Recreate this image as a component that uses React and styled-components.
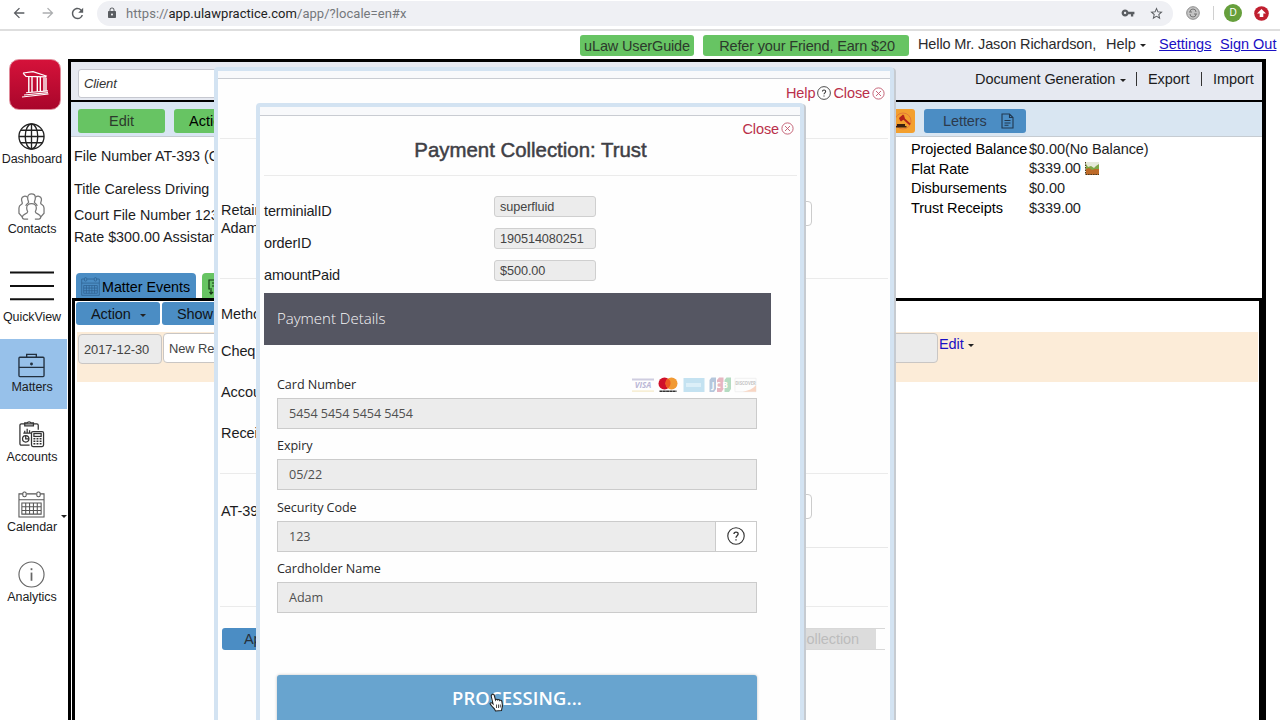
import React from 'react'
import styled, { createGlobalStyle } from 'styled-components'
import { MdArrowBack, MdArrowForward, MdLock, MdRefresh, MdStarBorder, MdVpnKey } from 'react-icons/md'

const GlobalStyle = createGlobalStyle`
  * {
    box-sizing: border-box;
  }
  body {
    margin: 0;
    background: #fff;
    color: #1c1c1e;
    font-family: "Liberation Sans", Arial, sans-serif;
    font-size: 14.5px;
    letter-spacing: -0.08px;
    overflow: hidden;
  }
  svg {
    display: block;
    flex-shrink: 0;
  }
`

const Page = styled.div`
  position: relative;
  display: flex;
  flex-direction: column;
  width: 1280px;
  height: 720px;
  overflow: hidden;
  white-space: nowrap;
`

/* browser bar */

const BrowserBar = styled.div`
  display: flex;
  align-items: center;
  height: 31px;
  padding: 0 11px 3px 11px;
  border-bottom: 2px solid #dedede;
  color: #5a5d61;
`

const NavIcon = styled.span`
  display: flex;
  margin-right: 13px;
  opacity: ${props => (props.$dim ? 0.5 : 1)};
`

const Address = styled.div`
  display: flex;
  align-items: center;
  width: 1076px;
  height: 25px;
  margin-left: -2px;
  padding: 0 9px;
  border-radius: 13px;
  background: #eff0f4;
`

const Url = styled.span`
  flex: 1;
  margin-left: 8px;
  color: #75787c;
  font-family: Roboto, sans-serif;
  font-size: 13px;
  letter-spacing: 0.04px;
`

const Host = styled.span`
  color: #222;
`

const AddressIcon = styled.span`
  display: flex;
  margin-left: 14px;
`

const Extensions = styled.div`
  display: flex;
  align-items: center;
  margin-left: 13px;
`

const Divider = styled.span`
  width: 1px;
  height: 14px;
  margin: 0 10px 0 13px;
  background: #d0d0d0;
`

const Avatar = styled.span`
  width: 18px;
  height: 18px;
  margin-right: 12px;
  border-radius: 50%;
  background: #669f3c;
  color: #fff;
  font-size: 10px;
  line-height: 18px;
  text-align: center;
`

/* links above the frame */

const TopLinks = styled.div`
  display: flex;
  height: 28px;
  padding: 4px 0 0 580px;
`

const GreenLink = styled.a`
  width: ${props => props.$width}px;
  height: 21px;
  margin-right: 9px;
  border-radius: 3px;
  background: #67c463;
  color: #2c3a2c;
  line-height: 22px;
  text-align: center;
  text-indent: ${props => props.$indent || 0}px;
  letter-spacing: -0.15px;
`

const TopItem = styled.span`
  width: ${props => props.$width}px;
  color: #2b2b2d;
  line-height: 19px;
  letter-spacing: ${props => props.$spacing || 0}px;
`

const BlueLink = styled.a`
  margin-top: ${props => props.$top || 0}px;
  color: #1a10c4;
  text-decoration: ${props => (props.$plain ? 'none' : 'underline')};
`

const Caret = styled.span`
  display: inline-block;
  margin-left: ${props => props.$gap || 5}px;
  vertical-align: 2px;
  border: 3px solid transparent;
  border-top-color: #222;
  border-bottom: 0;
`

/* sidebar */

const Workspace = styled.div`
  display: flex;
  flex: 1;
  min-height: 0;
`

const Sidebar = styled.nav`
  width: 68px;
  flex-shrink: 0;
`

const Logo = styled.div`
  display: flex;
  align-items: center;
  justify-content: center;
  width: 52px;
  height: 51px;
  margin: 0 0 0 9px;
  border: 1px solid #e08a99;
  border-radius: 10px;
  background: linear-gradient(#d5123a, #a9062b);
`

const NavItem = styled.div`
  display: flex;
  flex-direction: column;
  align-items: center;
  justify-content: flex-end;
  width: 67px;
  height: ${props => props.$height || 70}px;
  padding: 0 4px 13px 0;
  background: ${props => (props.$active ? '#97c1ea' : 'transparent')};
  position: relative;
`

const NavLabel = styled.span`
  margin-top: ${props => props.$gap || 0}px;
  padding-left: 1px;
  font-size: 12.5px;
  line-height: 18px;
`

const NavCaret = styled(Caret)`
  position: absolute;
  right: 0;
  bottom: 31px;
`

/* matter frame */

const Frame = styled.main`
  width: 1198px;
  height: 700px;
  border: 3px solid #000;
  border-right-width: 4px;
`

const SearchBar = styled.div`
  display: flex;
  align-items: center;
  height: 40px;
  padding: 4px 8px 0 7px;
  border-bottom: 2px solid #000;
  background: #e6e9f1;
`

const ClientInput = styled.div`
  width: 300px;
  height: 29px;
  padding-left: 5px;
  border: 1px solid #c6c8d0;
  border-radius: 3px;
  background: #fff;
  color: #333;
  font-size: 13px;
  font-style: italic;
  line-height: 28px;
`

const Menu = styled.div`
  display: flex;
  align-items: center;
  margin: 0 0 8px auto;
  line-height: 18px;
`

const MenuItem = styled.span`
  width: ${props => props.$width}px;
`

const MenuBar = styled.span`
  width: 1px;
  height: 14px;
  margin-right: 11px;
  background: #333;
`

const ActionBar = styled.div`
  display: flex;
  height: 35px;
  padding: 7px 0 0 7px;
  border-bottom: 1px solid #c6ccd2;
  background: #d9e6f2;
`

const GreenButton = styled.button`
  width: 87px;
  height: 24px;
  margin: 0 9px 0 0;
  padding: 0 0 0 ${props => props.$indent || 0}px;
  border: 0;
  border-radius: 3px;
  background: #67c463;
  color: ${props => props.$color || '#2c3a2c'};
  font: inherit;
  text-align: ${props => (props.$indent ? 'left' : 'center')};
`

const GavelButton = styled.span`
  display: flex;
  align-items: center;
  justify-content: center;
  width: 25px;
  height: 24px;
  margin: 0 9px 0 auto;
  border-radius: 3px;
  background: #f3a02f;
`

const LettersButton = styled.span`
  display: flex;
  align-items: center;
  justify-content: space-between;
  width: 102px;
  height: 24px;
  margin-right: 236px;
  padding: 0 12px 0 19px;
  border-radius: 3px;
  background: #4b8dc4;
  color: #2b3a4c;
`

const Details = styled.div`
  display: flex;
  height: 161px;
`

const MatterInfo = styled.div`
  width: 840px;
`

const InfoLine = styled.div`
  height: ${props => props.$height}px;
  padding-left: 3px;
  font-size: 14.3px;
  line-height: ${props => props.$height}px;
  letter-spacing: 0;
`

const Tabs = styled.div`
  display: flex;
  gap: 6px;
  margin: 27px 0 0 5px;
`

const Tab = styled.div`
  display: flex;
  align-items: center;
  gap: 2px;
  width: 120px;
  height: 25px;
  padding: 2px 0 0 5px;
  border-radius: 4px 4px 0 0;
  background: ${props => (props.$green ? '#67c463' : '#4b8dc4')};
  color: #000;
  font-size: 14.3px;
  letter-spacing: 0;
`

const Balances = styled.dl`
  display: grid;
  grid-template-columns: 118px auto;
  grid-auto-rows: 19.6px;
  align-content: start;
  margin: 2px 0 0;
  line-height: 20px;
`

const BalanceName = styled.dt`
  color: #000;
`

const BalanceValue = styled.dd`
  display: flex;
  align-items: center;
  gap: 4px;
  margin: 0;
`

const EventsPanel = styled.section`
  height: 500px;
  margin-left: 1px;
  padding: 1px 1px 0 1px;
  border: 3px solid #000;
`

const PanelButtons = styled.div`
  display: flex;
  gap: 2px;
  height: 30px;
`

const PanelButton = styled.span`
  width: 84px;
  height: 23px;
  padding-left: 15px;
  border-radius: 3px;
  background: #4b8dc4;
  color: #101418;
  line-height: 24px;
`

const EventRow = styled.div`
  display: flex;
  align-items: flex-start;
  height: 50px;
  margin-left: 1px;
  padding: 1px 0 0 1px;
  background: #fcecd8;
`

const EventInput = styled.div`
  width: ${props => props.$width}px;
  height: 30px;
  margin: ${props => props.$top || 0}px 1px 0 0;
  padding-left: 5px;
  border: 1px solid #c9c6c4;
  border-radius: 4px;
  background: ${props => (props.$locked ? '#ebebeb' : '#fff')};
  color: #444;
  font-size: 12.9px;
  line-height: 30px;
`

/* dialogs */

const Dialog = styled.div`
  position: absolute;
  top: ${props => props.$top}px;
  left: ${props => props.$left}px;
  width: ${props => props.$width}px;
  height: 800px;
  border: 4px solid #d3e3f2;
  border-radius: 4px;
  background: #fefefe;
  box-shadow: 2px 1px 0 #c6cbd1;
`

const DialogTop = styled.div`
  height: ${props => props.$height}px;
  border-bottom: 1px solid #c9ccd2;
  background: #f8f9fb;
`

const Section = styled.div`
  height: ${props => props.$height}px;
  margin: 0 2px;
  padding-top: ${props => props.$top || 0}px;
  border-bottom: 1px solid #ebebeb;
`

const DialogLinks = styled.div`
  display: flex;
  align-items: center;
  justify-content: flex-end;
  gap: 2px;
  height: ${props => props.$height}px;
  padding-right: ${props => props.$right}px;
  color: #b9304a;
  letter-spacing: -0.1px;
`

const FormRow = styled.div`
  display: flex;
  justify-content: space-between;
  height: ${props => props.$height}px;
  padding: 0 76px 0 1px;
  line-height: ${props => props.$line || props.$height}px;
`

const RoundInput = styled.div`
  width: 100px;
  height: 25px;
  border: 1px solid #ccc;
  border-radius: 4px;
  background: #fff;
`

const HalfRule = styled.div`
  height: 1px;
  margin: 17px 0 0 400px;
  background: #e8e8e8;
`

const DialogFooter = styled.div`
  display: flex;
  justify-content: space-between;
  margin: 21px 5px 0 4px;
`

const ApplyButton = styled.span`
  width: 84px;
  height: 22px;
  padding-left: 22px;
  border-radius: 3px;
  background: #4b8dc4;
  color: #26303a;
  line-height: 23px;
`

const CollectionGroup = styled.span`
  width: 160px;
  height: 22px;
  padding-right: 9px;
  border: solid #d8d8d8;
  border-width: 1px 0;
`

const CollectionButton = styled.span`
  display: block;
  height: 20px;
  padding-right: 17px;
  background: #dcdcdc;
  color: #bcbcbc;
  line-height: 21px;
  text-align: right;
`

const DialogTitle = styled.h1`
  height: 35px;
  margin: 0 3px 0 4px;
  border-bottom: 1px solid #ebebeb;
  color: #3f4046;
  font-size: 20.4px;
  font-weight: normal;
  letter-spacing: 0;
  line-height: 18px;
  text-align: center;
  -webkit-text-stroke: 0.5px #3f4046;
`

const Receipt = styled.div`
  padding: 20px 0 1px 4px;
`

const ReceiptRow = styled.div`
  display: flex;
  height: 32px;
`

const ReceiptName = styled.span`
  width: 230px;
  padding-top: 6px;
  line-height: 18px;
  letter-spacing: -0.15px;
`

const ReceiptValue = styled.span`
  width: 102px;
  height: 21px;
  padding-left: 5px;
  border: 1px solid #cfcfcf;
  border-radius: 3px;
  background: #ececec;
  color: #444;
  font-size: 12.7px;
  line-height: 20px;
`

const PaymentHeader = styled.h2`
  width: 507px;
  height: 52px;
  margin: 0 0 0 4px;
  padding-left: 13px;
  background: #555662;
  color: #f5f5f7;
  font-family: "Open Sans", "Noto Sans", sans-serif;
  font-size: 15px;
  font-weight: 300;
  letter-spacing: 0;
  line-height: 51px;
`

const PaymentForm = styled.div`
  width: 480px;
  margin-left: 17px;
  padding-top: 26px;
  font-family: "Open Sans", "Noto Sans", sans-serif;
  font-size: 12.6px;
  letter-spacing: -0.06px;
`

const Field = styled.div`
  height: 61.3px;
`

const FieldHead = styled.div`
  display: flex;
  align-items: center;
  justify-content: space-between;
  height: 27px;
  color: #2a2a2c;
`

const FieldBox = styled.div`
  display: flex;
  height: 31px;
  padding-left: 11px;
  border: 1px solid #cbcbcb;
  background: #ececec;
  color: #505050;
  line-height: 30px;
`

const FieldHelp = styled.span`
  display: flex;
  align-items: center;
  justify-content: center;
  width: 41px;
  margin-left: auto;
  border-left: 1px solid #cbcbcb;
  background: #fff;
`

const Cards = styled.span`
  display: flex;
  gap: 3px;
`

const PayButton = styled.button`
  display: block;
  width: 480px;
  height: 60px;
  margin: 59px 0 0;
  padding: 0 0 15px;
  border: 0;
  border-radius: 3px;
  background: #68a4cf;
  box-shadow: 0 0 3px rgba(0, 0, 0, 0.25);
  color: #fff;
  font-family: "Open Sans", "Noto Sans", sans-serif;
  font-size: 18.4px;
  font-weight: 600;
  letter-spacing: 0.15px;
`

const Cursor = styled.svg`
  position: absolute;
  top: 693px;
  left: 489px;
`

/* drawings */

const Temple = () => (
  <svg width="30" height="30" viewBox="0 0 30 30" fill="none" stroke="#fff">
    <path d="M3 3 13 1.700 27 6.300M3 3 6 6.300 26 6.800" strokeWidth="1.200" />
    <path d="M8.800 7v15M12 7v15M17.300 7v14.500M20.300 7v14.500M24 7.500V21M26 7.500V21" strokeWidth="1.400" />
    <path d="M6 22.700 28 20.900M4 25 28 22.600M2 27 28.500 24" strokeWidth="1.100" />
  </svg>
)

const Globe = () => (
  <svg width="27" height="27" viewBox="0 0 28 28" fill="none" stroke="#222" strokeWidth="1.400">
    <circle cx="14" cy="14" r="13" />
    <ellipse cx="14" cy="14" rx="6.500" ry="13" />
    <path d="M14 1v26M1 14h26M3 7.500h22M3 20.500h22" />
  </svg>
)

const People = () => (
  <svg width="27" height="27" viewBox="0 0 28 28" fill="none" stroke="#777" strokeWidth="1.300">
    <path d="M8.200 13.500c0-2.500 2.800-2.500 2.800-4 0-1-1-2-1-4.500 0-2.400 1.700-4 4-4s4 1.600 4 4c0 2.500-1 3.500-1 4.500 0 1.500 2.800 1.500 2.800 4" />
    <path d="M9.500 4.200C8 2.800 4.200 3 3.700 6c-.3 2.500.8 3 .8 4.500C4.500 12 1 12 1 15.500V21l3.500 4" />
    <path d="M18.500 4.200c1.500-1.400 5.300-1.200 5.800 1.800.3 2.500-.8 3-.8 4.500 0 1.500 3.500 1.500 3.500 5V21l-3.500 4" />
    <path d="M10.500 27H6.500c-1.500 0-2-.8-2-2 0-3.500 5.500-3 5.500-5.500 0-1-1-1.800-1-4 0-2.500 2-4.500 5-4.500s5 2 5 4.500c0 2.200-1 3-1 4 0 2.500 5.500 2 5.500 5.500 0 1.200-.5 2-2 2h-4" />
  </svg>
)

const Lines = () => (
  <svg width="44" height="30" viewBox="0 0 44 30" stroke="#111" strokeWidth="2">
    <path d="M0 1.500h44M0 15h44M0 28.300h44" />
  </svg>
)

const Briefcase = () => (
  <svg width="27" height="26" viewBox="0 0 28 26" fill="none" stroke="#22303f" strokeWidth="1.400">
    <rect x="1" y="5" width="26" height="20" rx="1" />
    <path d="M9 5V2h10v3M1 15.500h26" />
    <circle cx="14" cy="12" r=".8" />
  </svg>
)

const Ledger = () => (
  <svg width="27" height="27" viewBox="0 0 28 28" fill="none" stroke="#333" strokeWidth="1.300">
    <path d="M12 25H3.500A1.500 1.500 0 0 1 2 23.500V4.500A1.500 1.500 0 0 1 3.500 3h16A1.500 1.500 0 0 1 21 4.500V9" />
    <path d="M7 5V2h2.500c.5-1.500 3.500-1.500 4 0H16v3zM7 12v-2M9.500 12V8M12 12v-2.500M5.500 12.500h8" />
    <circle cx="8" cy="18.500" r="3.300" />
    <path d="M8 15v3.500h3.500" />
    <rect x="14" y="11" width="12.500" height="15.500" rx="1.500" fill="#fff" />
    <rect x="16.500" y="13" width="7.500" height="3" />
    <path d="M16 18.500h9M16 21h9M16 23.500h9" strokeWidth="1.600" strokeDasharray="2 1.200" />
  </svg>
)

const CalendarIcon = ({ size = 27, color = '#555' }) => (
  <svg width={size} height={size} viewBox="0 0 28 28" fill="none" stroke={color} strokeWidth="1.100">
    <path d="M5 3H1v24h26V3h-4M9 3h10M1 9h26" />
    <rect x="5" y="1" width="3.500" height="5" rx="1.500" />
    <rect x="19.500" y="1" width="3.500" height="5" rx="1.500" />
    <path d="M4 12.500h20v11.500H4zM4 16.300h20M4 20.200h20M8 12.500V24M12 12.500V24M16 12.500V24M20 12.500V24" />
  </svg>
)

const Info = () => (
  <svg width="27" height="27" viewBox="0 0 28 28" fill="none" stroke="#666" strokeWidth="1.200">
    <circle cx="14" cy="14" r="13" />
    <path d="M14 12v8.500" strokeWidth="1.800" />
    <path d="M14 7.500v2" strokeWidth="1.800" />
  </svg>
)

const CloseIcon = () => (
  <svg width="13" height="13" viewBox="0 0 13 13" fill="none" stroke="#c0566b" strokeWidth=".9">
    <circle cx="6.500" cy="6.500" r="5.600" />
    <path d="M4 4l5 5M9 4 4 9" />
  </svg>
)

const Question = ({ size }) => (
  <svg width={size} height={size} viewBox="0 0 16 16" fill="none" stroke="#333" strokeWidth="1">
    <circle cx="8" cy="8" r="7.300" />
    <path d="M6.200 6.300C6.200 4 9.900 4 9.900 6.200c0 1.500-1.900 1.600-1.900 3.300M8 10.800v1.300" strokeWidth="1.200" />
  </svg>
)

const Gavel = () => (
  <svg width="18" height="18" viewBox="0 0 18 18">
    <circle cx="9" cy="9" r="8" fill="none" stroke="#e0703a" strokeWidth=".8" />
    <path d="M3 12h8v2H3zM1.500 14h11v1.500h-11z" fill="#3a2010" />
    <path d="M5 6l4-3.500 1 1 1 3-4 3-1-1z" fill="#b3231a" />
    <path d="M9.500 6.500 16 12.500" stroke="#b3231a" strokeWidth="1.800" />
  </svg>
)

const Paper = () => (
  <svg width="13" height="16" viewBox="0 0 13 16" fill="none" stroke="#22384f" strokeWidth="1.100">
    <path d="M1 1h7.500L12 4.500V15H1zM8.500 1v3.500H12M3.500 7.500h6M3.500 10h6M3.500 12.300h4" />
  </svg>
)

const MiniChart = () => (
  <svg width="14" height="13" viewBox="0 0 14 13">
    <path d="M0 0h14v13H0z" fill="#e6eadb" />
    <path d="M1 2l2 3 3-1 3 2 2-2 3-2v11H1z" fill="#7fa648" />
    <path d="M1 7l3-1 3 2 3-1h4v6H1z" fill="#bd6a28" />
    <path d="M.5 0v12.500H14" fill="none" stroke="#4b3a20" strokeDasharray="1.500 1" />
  </svg>
)

const TabSheet = () => (
  <svg width="16" height="18" viewBox="0 0 16 18" fill="none" stroke="#143814" strokeWidth="1.200">
    <path d="M5 11H2V2h12v14H8M5 5h7M5 8h7M4 12v4M2.500 14l1.500 2 2-2" />
  </svg>
)

const Extension = () => (
  <svg width="14" height="14" viewBox="0 0 14 14" fill="none" stroke="#8a8a8a">
    <circle cx="7" cy="7" r="6.300" fill="#c4c4c4" />
    <path d="M4 6a3 3 0 0 1 6 0M10 8a3 3 0 0 1-6 0M3 6h3M8 8h3" stroke="#777" />
  </svg>
)

const Update = () => (
  <svg width="15" height="15" viewBox="0 0 15 15">
    <circle cx="7.500" cy="7.500" r="7.300" fill="#c01f2f" />
    <path d="M7.500 3 12 7.500H9.300V11H5.700V7.500H3z" fill="#fff" />
  </svg>
)

const CardMarks = () => (
  <Cards>
    <svg width="22" height="16" viewBox="0 0 22 16">
      <path d="M0 1.500h22v2H0z" fill="#cfcde0" />
      <path d="M0 13.500h22v1.200H0z" fill="#f4e8c4" />
      <text x="11" y="11.300" fill="#b9b6d6" fontFamily="Open Sans, sans-serif" fontSize="8" fontStyle="italic" fontWeight="700" textAnchor="middle">VISA</text>
    </svg>
    <svg width="22" height="16" viewBox="0 0 22 16">
      <circle cx="7.500" cy="6.500" r="6" fill="#d0102a" />
      <circle cx="14.500" cy="6.500" r="6" fill="#f19a33" />
      <path d="M11 1.600a6 6 0 0 1 0 9.800 6 6 0 0 1 0-9.800" fill="#ee5b22" />
      <path d="M2.500 14.300h17" stroke="#333" strokeWidth="1.400" strokeDasharray="3 .3" />
    </svg>
    <svg width="24" height="16" viewBox="0 0 24 16">
      <path d="M1.500 1h21v14h-21z" fill="#c4e2f1" />
      <path d="M4 6h15v4H4z" fill="#dceff8" />
    </svg>
    <svg width="22" height="16" viewBox="0 0 22 16">
      <path d="M2.500.5H7V12l-2 3H.5V3z" fill="#b5c7dc" />
      <path d="M10 .5h4.500V12l-2 3H8V3z" fill="#e6b6c1" />
      <path d="M17.500.5H22V12l-2 3h-4.500V3z" fill="#b5dcc2" />
      <text x="11.500" y="10.500" fill="#fff" fontFamily="Open Sans, sans-serif" fontSize="8" fontWeight="700" letterSpacing="1.500" textAnchor="middle">JCB</text>
    </svg>
    <svg width="23" height="16" viewBox="0 0 24 16">
      <path d="M1 1h22v14H1z" fill="#fdfdfd" stroke="#eee" strokeWidth=".8" />
      <path d="M23 8v7H9c6-1 11-3 14-7" fill="#f8d6c4" />
      <text x="12" y="8.500" fill="#c4c4c4" fontFamily="Open Sans, sans-serif" fontSize="4.500" fontWeight="700" textAnchor="middle">DISCOVER</text>
    </svg>
  </Cards>
)

const navItems = [
  { label: 'Dashboard', icon: <Globe />, height: 71 },
  { label: 'Contacts', icon: <People />, height: 70 },
  { label: 'QuickView', icon: <Lines />, height: 88, gap: 7 },
  { label: 'Matters', icon: <Briefcase />, active: true },
  { label: 'Accounts', icon: <Ledger /> },
  { label: 'Calendar', icon: <CalendarIcon />, menu: true },
  { label: 'Analytics', icon: <Info /> },
]

const balances = [
  ['Projected Balance', '$0.00(No Balance)'],
  ['Flat Rate', '$339.00', <MiniChart key="chart" />],
  ['Disbursements', '$0.00'],
  ['Trust Receipts', '$339.00'],
]

const receipt = [
  ['terminialID', 'superfluid'],
  ['orderID', '190514080251'],
  ['amountPaid', '$500.00'],
]

const Browser = () => (
  <BrowserBar>
    <NavIcon><MdArrowBack size={16} /></NavIcon>
    <NavIcon $dim><MdArrowForward size={16} /></NavIcon>
    <NavIcon><MdRefresh size={17} /></NavIcon>
    <Address>
      <MdLock size={12} />
      <Url>https://<Host>app.ulawpractice.com</Host>/app/?locale=en#x</Url>
      <AddressIcon><MdVpnKey size={14} /></AddressIcon>
      <AddressIcon><MdStarBorder size={15} /></AddressIcon>
    </Address>
    <Extensions>
      <Extension />
      <Divider />
      <Avatar>D</Avatar>
      <Update />
    </Extensions>
  </BrowserBar>
)

const Matter = () => (
  <Frame>
    <SearchBar>
      <ClientInput>Client</ClientInput>
      <Menu>
        <MenuItem $width={161}>Document Generation<Caret /></MenuItem>
        <MenuBar />
        <MenuItem $width={53}>Export</MenuItem>
        <MenuBar />
        <MenuItem $width={41}>Import</MenuItem>
      </Menu>
    </SearchBar>
    <ActionBar>
      <GreenButton>Edit</GreenButton>
      <GreenButton $color="#000" $indent={15}>Action</GreenButton>
      <GavelButton><Gavel /></GavelButton>
      <LettersButton>Letters<Paper /></LettersButton>
    </ActionBar>
    <Details>
      <MatterInfo>
        <InfoLine $height={38}>File Number AT-393 (O</InfoLine>
        <InfoLine $height={28}>Title Careless Driving</InfoLine>
        <InfoLine $height={25}>Court File Number 123</InfoLine>
        <InfoLine $height={18}>Rate $300.00 Assistan</InfoLine>
        <Tabs>
          <Tab><CalendarIcon size={19} color="#2d618f" />Matter Events</Tab>
          <Tab $green><TabSheet /></Tab>
        </Tabs>
      </MatterInfo>
      <Balances>
        {balances.map(([name, value, chart]) => (
          <React.Fragment key={name}>
            <BalanceName>{name}</BalanceName>
            <BalanceValue>{value}{chart}</BalanceValue>
          </React.Fragment>
        ))}
      </Balances>
    </Details>
    <EventsPanel>
      <PanelButtons>
        <PanelButton>Action<Caret $gap={9} /></PanelButton>
        <PanelButton>Show</PanelButton>
      </PanelButtons>
      <EventRow>
        <EventInput $width={84} $top={1} $locked>2017-12-30</EventInput>
        <EventInput $width={640}>New Ret</EventInput>
        <EventInput $width={134} $locked />
        <BlueLink $plain $top={3}>Edit<Caret $gap={4} /></BlueLink>
      </EventRow>
    </EventsPanel>
  </Frame>
)

const RetainerDialog = () => (
  <Dialog $top={67} $left={214} $width={680}>
    <DialogTop $height={8} />
    <Section $height={60}>
      <DialogLinks $height={28} $right={3}>
        Help<Question size={14} />Close<CloseIcon />
      </DialogLinks>
    </Section>
    <Section $height={140} $top={62}>
      <FormRow $height={36} $line={18}>
        <span>Retain<br />Adam</span>
        <RoundInput />
      </FormRow>
    </Section>
    <Section $height={195} $top={17}>
      <FormRow $height={37}>Metho</FormRow>
      <FormRow $height={36}>Cheq</FormRow>
      <FormRow $height={46}>Accou</FormRow>
      <FormRow $height={36}>Recei</FormRow>
    </Section>
    <Section $height={133} $top={20}>
      <FormRow $height={36} $line={35}>
        <span>AT-39</span>
        <RoundInput />
      </FormRow>
      <HalfRule />
    </Section>
    <DialogFooter>
      <ApplyButton>App</ApplyButton>
      <CollectionGroup>
        <CollectionButton>Collection</CollectionButton>
      </CollectionGroup>
    </DialogFooter>
  </Dialog>
)

const PaymentDialog = () => (
  <Dialog $top={103} $left={256} $width={548}>
    <DialogTop $height={9} />
    <DialogLinks $height={25} $right={6}>
      Close<CloseIcon />
    </DialogLinks>
    <DialogTitle>Payment Collection: Trust</DialogTitle>
    <Receipt>
      {receipt.map(([name, value]) => (
        <ReceiptRow key={name}>
          <ReceiptName>{name}</ReceiptName>
          <ReceiptValue>{value}</ReceiptValue>
        </ReceiptRow>
      ))}
    </Receipt>
    <PaymentHeader>Payment Details</PaymentHeader>
    <PaymentForm>
      <Field>
        <FieldHead>Card Number<CardMarks /></FieldHead>
        <FieldBox>5454 5454 5454 5454</FieldBox>
      </Field>
      <Field>
        <FieldHead>Expiry</FieldHead>
        <FieldBox>05/22</FieldBox>
      </Field>
      <Field>
        <FieldHead>Security Code</FieldHead>
        <FieldBox>123<FieldHelp><Question size={18} /></FieldHelp></FieldBox>
      </Field>
      <Field>
        <FieldHead>Cardholder Name</FieldHead>
        <FieldBox>Adam</FieldBox>
      </Field>
      <PayButton>PROCESSING...</PayButton>
    </PaymentForm>
  </Dialog>
)

export default function App() {
  return (
    <Page>
      <GlobalStyle />
      <Browser />
      <TopLinks>
        <GreenLink $width={114}>uLaw UserGuide</GreenLink>
        <GreenLink $width={206} $indent={2}>Refer your Friend, Earn $20</GreenLink>
        <TopItem $width={188} $spacing={-0.12}>Hello Mr. Jason Richardson,</TopItem>
        <TopItem $width={53}>Help<Caret $gap={4} /></TopItem>
        <TopItem $width={61}><BlueLink>Settings</BlueLink></TopItem>
        <TopItem $width={60}><BlueLink>Sign Out</BlueLink></TopItem>
      </TopLinks>
      <Workspace>
        <Sidebar>
          <Logo><Temple /></Logo>
          {navItems.map(item => (
            <NavItem key={item.label} $height={item.height} $active={item.active}>
              {item.icon}
              <NavLabel $gap={item.gap}>{item.label}</NavLabel>
              {item.menu && <NavCaret />}
            </NavItem>
          ))}
        </Sidebar>
        <Matter />
      </Workspace>
      <RetainerDialog />
      <PaymentDialog />
      <Cursor width="15" height="19" viewBox="0 0 15 19" fill="#fff" stroke="#222" strokeWidth="1.100">
        <path d="M3 1.500c1-.8 2 0 2.300 1L6.500 7c.5-1 1.800-1 2.200 0 .7-.8 1.800-.4 2 .5.800-.6 1.900-.1 2.100.8.600 2.500 1.200 4.200.2 6.700L12.500 17.500l-6 .5-1-2C4 14.500 2 12.500 1 10.800c.2-1.500 1.700-1.300 3 0L2.300 3.500c-.2-.8 0-1.500.7-2z" />
        <path d="M7.500 11.500v3.500M9.500 11.500v3.500M11.300 11.500v3" fill="none" strokeWidth=".8" />
      </Cursor>
    </Page>
  )
}
